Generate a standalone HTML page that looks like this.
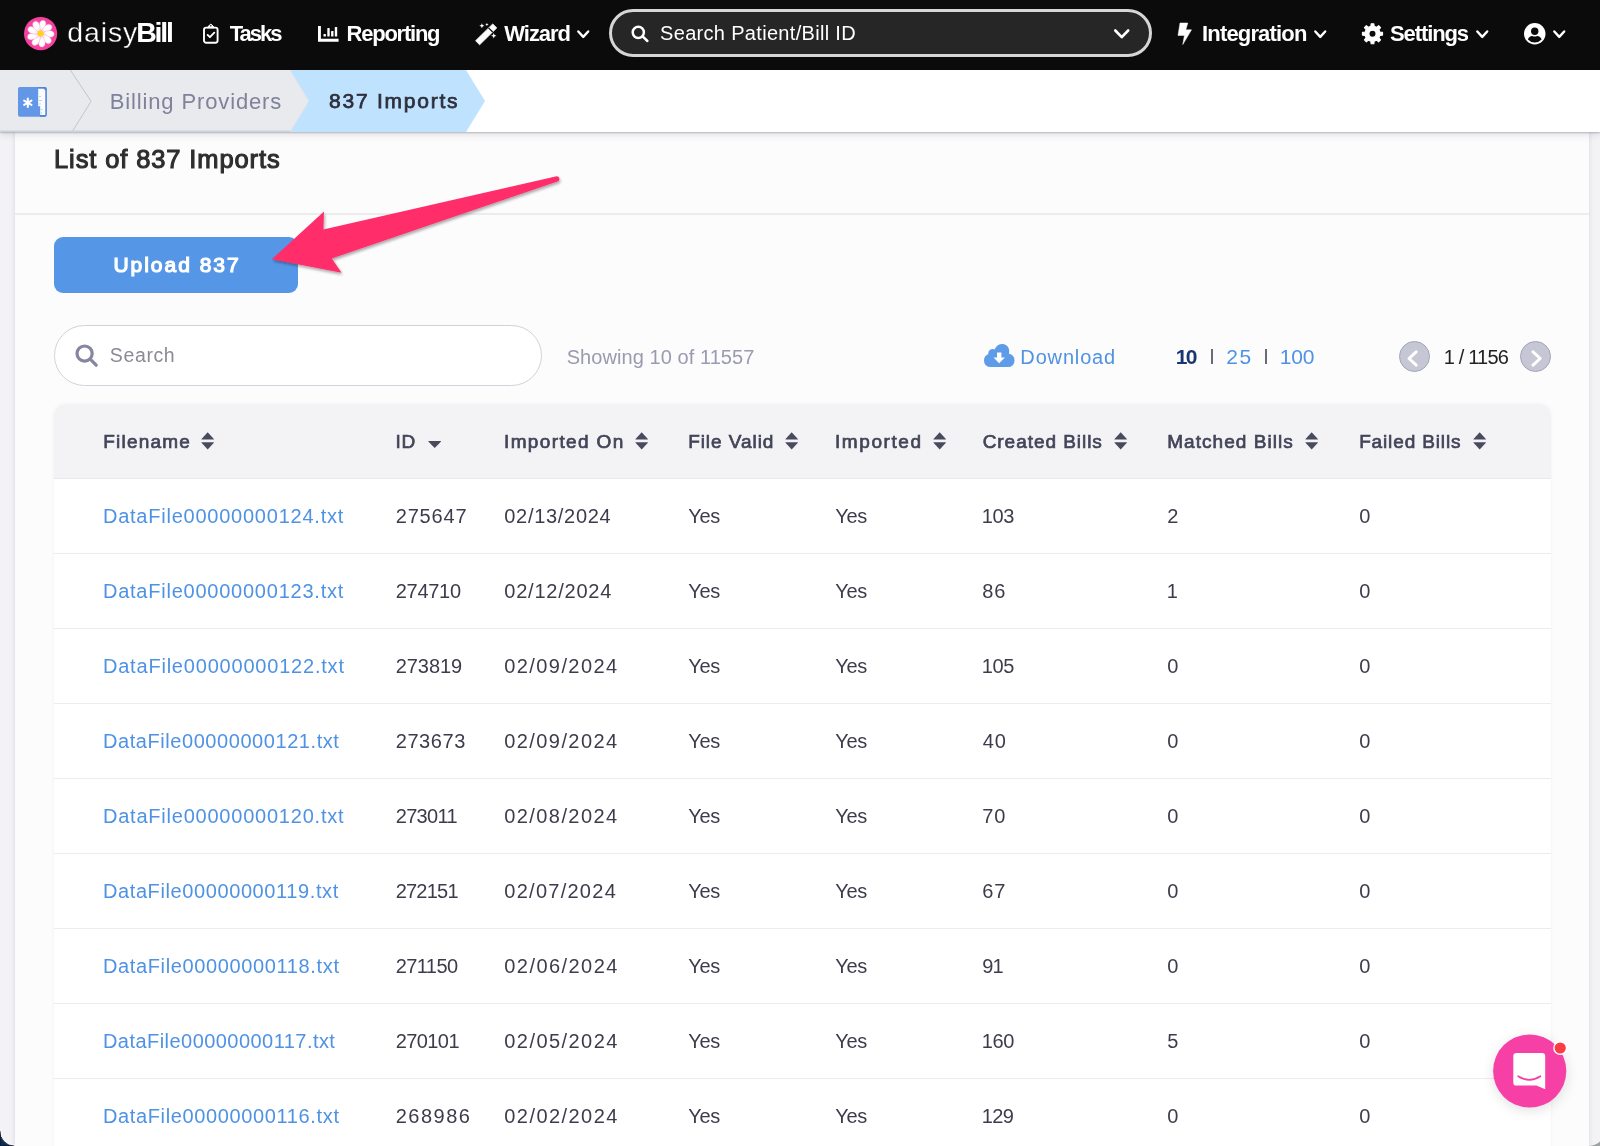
<!DOCTYPE html><html lang="en"><head><meta charset="utf-8"><title>837 Imports - daisyBill</title><style>
*{box-sizing:border-box;margin:0;padding:0}
html,body{width:1600px;height:1146px;overflow:hidden}
body{background:#f3f3f6;font-family:'Liberation Sans',sans-serif;position:relative}
.t{position:absolute;line-height:1;white-space:pre}
.abs{position:absolute}
.lt{-webkit-text-stroke:.35px #0b0b0b}
svg{position:absolute;overflow:visible}
#root{position:absolute;left:0;top:0;width:1600px;height:1146px;will-change:transform}
#nav{position:absolute;left:0;top:0;width:1600px;height:70px;background:#0b0b0b}
#crumb{position:absolute;left:0;top:70px;width:1600px;height:62px;background:#fff;box-shadow:0 1px 1.5px rgba(70,70,100,.30),0 2px 8px rgba(60,60,90,.16)}
#card{position:absolute;left:15px;top:131px;width:1574px;height:1030px;background:#fcfcfc;box-shadow:0 0 5px rgba(40,40,70,.13)}
#divider{position:absolute;left:15px;top:213px;width:1574px;height:2px;background:#ececee}
#btn{position:absolute;left:53.6px;top:237.3px;width:244.4px;height:55.3px;border-radius:9px;background:#5597e6}
#search{position:absolute;left:53.5px;top:325px;width:488.5px;height:60.5px;border-radius:31px;background:#fff;border:1.5px solid #d2d2dd}
#sbox{position:absolute;left:609.4px;top:8.7px;width:542.8px;height:48.7px;border-radius:25px;background:#262626;border:3px solid #d6d6d6}
#table{position:absolute;left:53.5px;top:404px;width:1497.5px;height:760px;background:#fff;border-radius:12px 12px 0 0;overflow:hidden;box-shadow:0 0 4px rgba(60,60,90,.06)}
#thead{position:absolute;left:0;top:0;width:100%;height:74px;background:#f3f3f6}
.rl{position:absolute;left:0;width:100%;height:1.5px;background:#ececf0}
.pg{position:absolute;width:31px;height:31px;border-radius:50%;background:#c6c7d5;border:1.5px solid #a3a4ba}
</style></head><body><div id="root">
<main>
<div id="card"></div><div id="divider"></div>
<span class="t" style="left:54.05px;top:147px;font-size:25.5px;font-weight:400;color:#2e2e30;letter-spacing:0.88px;-webkit-text-stroke:1.1px #2e2e30">List of 837 Imports</span>
<div id="btn"></div>
<span class="t" style="left:113.38px;top:254px;font-size:21px;font-weight:400;color:#fff;letter-spacing:1.983px;-webkit-text-stroke:1.2px #fff">Upload 837</span>
<svg style="left:0;top:0" width="1600" height="400" viewBox="0 0 1600 400">
<defs><filter id="sh" x="-10%" y="-10%" width="120%" height="130%"><feGaussianBlur in="SourceAlpha" stdDeviation="1.6"/><feOffset dx="0.5" dy="2"/><feComponentTransfer><feFuncA type="linear" slope=".35"/></feComponentTransfer><feMerge><feMergeNode/><feMergeNode in="SourceGraphic"/></feMerge></filter></defs>
<path filter="url(#sh)" fill="#ff2d6a" d="M555.6 176.4 Q558.6 175.6 559.3 178.3 Q559.9 180.6 557.4 181.6 L331.8 258.4 L341.6 272.8 L271.8 259.3 L324 211.4 L323.4 229.6 Z"/>
</svg>
<div id="search"></div>
<svg style="left:74.6px;top:344.2px" width="23" height="23" viewBox="0 0 23 23" fill="none" stroke="#8686a1" stroke-width="3.2">
<circle cx="9.6" cy="9.6" r="7.6"/><path d="M15.2 15.2 L21.2 21.2" stroke-linecap="round"/></svg>
<span class="t" style="left:109.86px;top:346px;font-size:19.5px;font-weight:400;color:#8b8b96;letter-spacing:0.615px">Search</span>
<span class="t" style="left:566.64px;top:347px;font-size:20px;font-weight:400;color:#9a9ab0;letter-spacing:0.072px">Showing 10 of 11557</span>
<svg style="left:983.5px;top:344px" width="30.5" height="23" viewBox="0 0 30.5 23">
<path fill="#5e9be8" d="M7 23 Q0 23 0 16.4 Q0 11.8 4.2 10.2 Q4 7.2 6.4 5.6 Q8.6 4.4 10.6 5.4 Q13.2 0 18.4 0 Q25.4 .6 25.2 8 Q25.2 9 24.9 9.8 Q30.5 11 30.5 16.4 Q30.5 23 23.6 23Z"/>
<path fill="#fff" d="M13 8.4 h4.4 v5 h3.5 l-5.7 5.9 l-5.7 -5.9 h3.5z"/></svg>
<span class="t" style="left:1020.36px;top:347px;font-size:20px;font-weight:400;color:#4f92e4;letter-spacing:0.844px">Download</span>
<span class="t" style="left:1175.65px;top:346px;font-size:21px;font-weight:700;color:#1a3672;letter-spacing:-1.657px">10</span>
<div class="abs" style="left:1211px;top:348.8px;width:2.1px;height:15.4px;background:#6a6a7a"></div>
<span class="t" style="left:1226.32px;top:346px;font-size:21px;font-weight:400;color:#4f92e4;letter-spacing:1.6px">25</span>
<div class="abs" style="left:1265px;top:348.8px;width:2.1px;height:15.4px;background:#6a6a7a"></div>
<span class="t" style="left:1279.80px;top:346px;font-size:21px;font-weight:400;color:#4f92e4;letter-spacing:-0.2px">100</span>
<div class="pg" style="left:1398.5px;top:341.2px"></div>
<svg style="left:1406px;top:349.5px" width="13" height="17" viewBox="0 0 13 17" fill="none" stroke="#fff" stroke-width="3" stroke-linecap="round" stroke-linejoin="round"><path d="M10.2 1.8 L3 8.5 L10.2 15.2"/></svg>
<span class="t" style="left:1443.66px;top:347px;font-size:20px;font-weight:400;color:#222;letter-spacing:-0.799px">1 / 1156</span>
<div class="pg" style="left:1520px;top:341.2px"></div>
<svg style="left:1530px;top:349.5px" width="13" height="17" viewBox="0 0 13 17" fill="none" stroke="#fff" stroke-width="3" stroke-linecap="round" stroke-linejoin="round"><path d="M3 1.8 L10.2 8.5 L3 15.2"/></svg>
<div id="table"><div id="thead"></div><div class="rl" style="top:73.75px;background:#e8e8ee"></div><div class="rl" style="top:148.75px"></div><div class="rl" style="top:223.75px"></div><div class="rl" style="top:298.75px"></div><div class="rl" style="top:373.75px"></div><div class="rl" style="top:448.75px"></div><div class="rl" style="top:523.75px"></div><div class="rl" style="top:598.75px"></div><div class="rl" style="top:673.75px"></div><div class="rl" style="top:748.75px"></div></div>
<span class="t" style="left:103.33px;top:432px;font-size:19px;font-weight:400;color:#434458;letter-spacing:1.188px;-webkit-text-stroke:0.7px #434458">Filename</span>
<svg style="left:200.9px;top:431.5px" width="13.4" height="17.8" viewBox="0 0 13.4 17.8" fill="#4a4a5e"><path d="M6.7 0.3 L12.9 7 Q13.2 7.6 12.5 7.6 H0.9 Q0.2 7.6 0.5 7Z"/><path d="M6.7 17.5 L12.9 10.8 Q13.2 10.2 12.5 10.2 H0.9 Q0.2 10.2 0.5 10.8Z"/></svg>
<span class="t" style="left:395.49px;top:432px;font-size:19px;font-weight:400;color:#434458;letter-spacing:0.629px;-webkit-text-stroke:0.7px #434458">ID</span>
<span class="t" style="left:503.99px;top:432px;font-size:19px;font-weight:400;color:#434458;letter-spacing:1.375px;-webkit-text-stroke:0.7px #434458">Imported On</span>
<svg style="left:635.4px;top:431.5px" width="13.4" height="17.8" viewBox="0 0 13.4 17.8" fill="#4a4a5e"><path d="M6.7 0.3 L12.9 7 Q13.2 7.6 12.5 7.6 H0.9 Q0.2 7.6 0.5 7Z"/><path d="M6.7 17.5 L12.9 10.8 Q13.2 10.2 12.5 10.2 H0.9 Q0.2 10.2 0.5 10.8Z"/></svg>
<span class="t" style="left:688.13px;top:432px;font-size:19px;font-weight:400;color:#434458;letter-spacing:0.945px;-webkit-text-stroke:0.7px #434458">File Valid</span>
<svg style="left:785.4px;top:431.5px" width="13.4" height="17.8" viewBox="0 0 13.4 17.8" fill="#4a4a5e"><path d="M6.7 0.3 L12.9 7 Q13.2 7.6 12.5 7.6 H0.9 Q0.2 7.6 0.5 7Z"/><path d="M6.7 17.5 L12.9 10.8 Q13.2 10.2 12.5 10.2 H0.9 Q0.2 10.2 0.5 10.8Z"/></svg>
<span class="t" style="left:834.99px;top:432px;font-size:19px;font-weight:400;color:#434458;letter-spacing:1.584px;-webkit-text-stroke:0.7px #434458">Imported</span>
<svg style="left:932.9px;top:431.5px" width="13.4" height="17.8" viewBox="0 0 13.4 17.8" fill="#4a4a5e"><path d="M6.7 0.3 L12.9 7 Q13.2 7.6 12.5 7.6 H0.9 Q0.2 7.6 0.5 7Z"/><path d="M6.7 17.5 L12.9 10.8 Q13.2 10.2 12.5 10.2 H0.9 Q0.2 10.2 0.5 10.8Z"/></svg>
<span class="t" style="left:982.66px;top:432px;font-size:19px;font-weight:400;color:#434458;letter-spacing:0.958px;-webkit-text-stroke:0.7px #434458">Created Bills</span>
<svg style="left:1114.4px;top:431.5px" width="13.4" height="17.8" viewBox="0 0 13.4 17.8" fill="#4a4a5e"><path d="M6.7 0.3 L12.9 7 Q13.2 7.6 12.5 7.6 H0.9 Q0.2 7.6 0.5 7Z"/><path d="M6.7 17.5 L12.9 10.8 Q13.2 10.2 12.5 10.2 H0.9 Q0.2 10.2 0.5 10.8Z"/></svg>
<span class="t" style="left:1167.13px;top:432px;font-size:19px;font-weight:400;color:#434458;letter-spacing:1.058px;-webkit-text-stroke:0.7px #434458">Matched Bills</span>
<svg style="left:1305.4px;top:431.5px" width="13.4" height="17.8" viewBox="0 0 13.4 17.8" fill="#4a4a5e"><path d="M6.7 0.3 L12.9 7 Q13.2 7.6 12.5 7.6 H0.9 Q0.2 7.6 0.5 7Z"/><path d="M6.7 17.5 L12.9 10.8 Q13.2 10.2 12.5 10.2 H0.9 Q0.2 10.2 0.5 10.8Z"/></svg>
<span class="t" style="left:1359.13px;top:432px;font-size:19px;font-weight:400;color:#434458;letter-spacing:0.867px;-webkit-text-stroke:0.7px #434458">Failed Bills</span>
<svg style="left:1472.9px;top:431.5px" width="13.4" height="17.8" viewBox="0 0 13.4 17.8" fill="#4a4a5e"><path d="M6.7 0.3 L12.9 7 Q13.2 7.6 12.5 7.6 H0.9 Q0.2 7.6 0.5 7Z"/><path d="M6.7 17.5 L12.9 10.8 Q13.2 10.2 12.5 10.2 H0.9 Q0.2 10.2 0.5 10.8Z"/></svg>
<svg style="left:428px;top:441.4px" width="13.4" height="7" viewBox="0 0 13.4 7" fill="#4a4a5e"><path d="M6.7 6.9 L12.9 .8 Q13.2 .1 12.5 .1 H0.9 Q0.2 .1 .5 .8Z"/></svg>
<span class="t r fn" style="left:102.96px;top:506px;font-size:20px;font-weight:400;color:#4f92e4;letter-spacing:0.765px">DataFile00000000124.txt</span>
<span class="t r" style="left:395.70px;top:506px;font-size:20px;font-weight:400;color:#3c3c4c;letter-spacing:0.838px">275647</span>
<span class="t r" style="left:504.30px;top:506px;font-size:20px;font-weight:400;color:#3c3c4c;letter-spacing:0.698px">02/13/2024</span>
<span class="t r" style="left:688.24px;top:506px;font-size:20px;font-weight:400;color:#3c3c4c;letter-spacing:-0.354px">Yes</span>
<span class="t r" style="left:835.24px;top:506px;font-size:20px;font-weight:400;color:#3c3c4c;letter-spacing:-0.354px">Yes</span>
<span class="t r" style="left:981.76px;top:506px;font-size:20px;font-weight:400;color:#3c3c4c;letter-spacing:-0.433px">103</span>
<span class="t r" style="left:1167.30px;top:506px;font-size:20px;font-weight:400;color:#3c3c4c;letter-spacing:0.9px">2</span>
<span class="t r" style="left:1359.30px;top:506px;font-size:20px;font-weight:400;color:#3c3c4c;letter-spacing:0.9px">0</span>
<span class="t r fn" style="left:102.96px;top:581px;font-size:20px;font-weight:400;color:#4f92e4;letter-spacing:0.765px">DataFile00000000123.txt</span>
<span class="t r" style="left:395.70px;top:581px;font-size:20px;font-weight:400;color:#3c3c4c;letter-spacing:-0.274px">274710</span>
<span class="t r" style="left:504.30px;top:581px;font-size:20px;font-weight:400;color:#3c3c4c;letter-spacing:0.775px">02/12/2024</span>
<span class="t r" style="left:688.24px;top:581px;font-size:20px;font-weight:400;color:#3c3c4c;letter-spacing:-0.354px">Yes</span>
<span class="t r" style="left:835.24px;top:581px;font-size:20px;font-weight:400;color:#3c3c4c;letter-spacing:-0.354px">Yes</span>
<span class="t r" style="left:982.30px;top:581px;font-size:20px;font-weight:400;color:#3c3c4c;letter-spacing:0.9px">86</span>
<span class="t r" style="left:1166.76px;top:581px;font-size:20px;font-weight:400;color:#3c3c4c;letter-spacing:-0.8px">1</span>
<span class="t r" style="left:1359.30px;top:581px;font-size:20px;font-weight:400;color:#3c3c4c;letter-spacing:0.9px">0</span>
<span class="t r fn" style="left:102.96px;top:656px;font-size:20px;font-weight:400;color:#4f92e4;letter-spacing:0.796px">DataFile00000000122.txt</span>
<span class="t r" style="left:395.70px;top:656px;font-size:20px;font-weight:400;color:#3c3c4c;letter-spacing:-0.044px">273819</span>
<span class="t r" style="left:504.30px;top:656px;font-size:20px;font-weight:400;color:#3c3c4c;letter-spacing:1.409px">02/09/2024</span>
<span class="t r" style="left:688.24px;top:656px;font-size:20px;font-weight:400;color:#3c3c4c;letter-spacing:-0.354px">Yes</span>
<span class="t r" style="left:835.24px;top:656px;font-size:20px;font-weight:400;color:#3c3c4c;letter-spacing:-0.354px">Yes</span>
<span class="t r" style="left:981.76px;top:656px;font-size:20px;font-weight:400;color:#3c3c4c;letter-spacing:-0.315px">105</span>
<span class="t r" style="left:1167.30px;top:656px;font-size:20px;font-weight:400;color:#3c3c4c;letter-spacing:0.9px">0</span>
<span class="t r" style="left:1359.30px;top:656px;font-size:20px;font-weight:400;color:#3c3c4c;letter-spacing:0.9px">0</span>
<span class="t r fn" style="left:102.96px;top:731px;font-size:20px;font-weight:400;color:#4f92e4;letter-spacing:0.565px">DataFile00000000121.txt</span>
<span class="t r" style="left:395.70px;top:731px;font-size:20px;font-weight:400;color:#3c3c4c;letter-spacing:0.591px">273673</span>
<span class="t r" style="left:504.30px;top:731px;font-size:20px;font-weight:400;color:#3c3c4c;letter-spacing:1.409px">02/09/2024</span>
<span class="t r" style="left:688.24px;top:731px;font-size:20px;font-weight:400;color:#3c3c4c;letter-spacing:-0.354px">Yes</span>
<span class="t r" style="left:835.24px;top:731px;font-size:20px;font-weight:400;color:#3c3c4c;letter-spacing:-0.354px">Yes</span>
<span class="t r" style="left:982.84px;top:731px;font-size:20px;font-weight:400;color:#3c3c4c;letter-spacing:0.9px">40</span>
<span class="t r" style="left:1167.30px;top:731px;font-size:20px;font-weight:400;color:#3c3c4c;letter-spacing:0.9px">0</span>
<span class="t r" style="left:1359.30px;top:731px;font-size:20px;font-weight:400;color:#3c3c4c;letter-spacing:0.9px">0</span>
<span class="t r fn" style="left:102.96px;top:806px;font-size:20px;font-weight:400;color:#4f92e4;letter-spacing:0.778px">DataFile00000000120.txt</span>
<span class="t r" style="left:395.70px;top:806px;font-size:20px;font-weight:400;color:#3c3c4c;letter-spacing:-0.677px">273011</span>
<span class="t r" style="left:504.30px;top:806px;font-size:20px;font-weight:400;color:#3c3c4c;letter-spacing:1.409px">02/08/2024</span>
<span class="t r" style="left:688.24px;top:806px;font-size:20px;font-weight:400;color:#3c3c4c;letter-spacing:-0.354px">Yes</span>
<span class="t r" style="left:835.24px;top:806px;font-size:20px;font-weight:400;color:#3c3c4c;letter-spacing:-0.354px">Yes</span>
<span class="t r" style="left:982.26px;top:806px;font-size:20px;font-weight:400;color:#3c3c4c;letter-spacing:0.853px">70</span>
<span class="t r" style="left:1167.30px;top:806px;font-size:20px;font-weight:400;color:#3c3c4c;letter-spacing:0.9px">0</span>
<span class="t r" style="left:1359.30px;top:806px;font-size:20px;font-weight:400;color:#3c3c4c;letter-spacing:0.9px">0</span>
<span class="t r fn" style="left:102.96px;top:881px;font-size:20px;font-weight:400;color:#4f92e4;letter-spacing:0.603px">DataFile00000000119.txt</span>
<span class="t r" style="left:395.70px;top:881px;font-size:20px;font-weight:400;color:#3c3c4c;letter-spacing:-0.785px">272151</span>
<span class="t r" style="left:504.30px;top:881px;font-size:20px;font-weight:400;color:#3c3c4c;letter-spacing:1.264px">02/07/2024</span>
<span class="t r" style="left:688.24px;top:881px;font-size:20px;font-weight:400;color:#3c3c4c;letter-spacing:-0.354px">Yes</span>
<span class="t r" style="left:835.24px;top:881px;font-size:20px;font-weight:400;color:#3c3c4c;letter-spacing:-0.354px">Yes</span>
<span class="t r" style="left:982.23px;top:881px;font-size:20px;font-weight:400;color:#3c3c4c;letter-spacing:0.9px">67</span>
<span class="t r" style="left:1167.30px;top:881px;font-size:20px;font-weight:400;color:#3c3c4c;letter-spacing:0.9px">0</span>
<span class="t r" style="left:1359.30px;top:881px;font-size:20px;font-weight:400;color:#3c3c4c;letter-spacing:0.9px">0</span>
<span class="t r fn" style="left:102.96px;top:956px;font-size:20px;font-weight:400;color:#4f92e4;letter-spacing:0.635px">DataFile00000000118.txt</span>
<span class="t r" style="left:395.70px;top:956px;font-size:20px;font-weight:400;color:#3c3c4c;letter-spacing:-0.566px">271150</span>
<span class="t r" style="left:504.30px;top:956px;font-size:20px;font-weight:400;color:#3c3c4c;letter-spacing:1.442px">02/06/2024</span>
<span class="t r" style="left:688.24px;top:956px;font-size:20px;font-weight:400;color:#3c3c4c;letter-spacing:-0.354px">Yes</span>
<span class="t r" style="left:835.24px;top:956px;font-size:20px;font-weight:400;color:#3c3c4c;letter-spacing:-0.354px">Yes</span>
<span class="t r" style="left:982.29px;top:956px;font-size:20px;font-weight:400;color:#3c3c4c;letter-spacing:-0.8px">91</span>
<span class="t r" style="left:1167.30px;top:956px;font-size:20px;font-weight:400;color:#3c3c4c;letter-spacing:0.9px">0</span>
<span class="t r" style="left:1359.30px;top:956px;font-size:20px;font-weight:400;color:#3c3c4c;letter-spacing:0.9px">0</span>
<span class="t r fn" style="left:102.96px;top:1031px;font-size:20px;font-weight:400;color:#4f92e4;letter-spacing:0.453px">DataFile00000000117.txt</span>
<span class="t r" style="left:395.70px;top:1031px;font-size:20px;font-weight:400;color:#3c3c4c;letter-spacing:-0.585px">270101</span>
<span class="t r" style="left:504.30px;top:1031px;font-size:20px;font-weight:400;color:#3c3c4c;letter-spacing:1.442px">02/05/2024</span>
<span class="t r" style="left:688.24px;top:1031px;font-size:20px;font-weight:400;color:#3c3c4c;letter-spacing:-0.354px">Yes</span>
<span class="t r" style="left:835.24px;top:1031px;font-size:20px;font-weight:400;color:#3c3c4c;letter-spacing:-0.354px">Yes</span>
<span class="t r" style="left:981.76px;top:1031px;font-size:20px;font-weight:400;color:#3c3c4c;letter-spacing:-0.346px">160</span>
<span class="t r" style="left:1167.21px;top:1031px;font-size:20px;font-weight:400;color:#3c3c4c;letter-spacing:0.9px">5</span>
<span class="t r" style="left:1359.30px;top:1031px;font-size:20px;font-weight:400;color:#3c3c4c;letter-spacing:0.9px">0</span>
<span class="t r fn" style="left:102.96px;top:1106px;font-size:20px;font-weight:400;color:#4f92e4;letter-spacing:0.635px">DataFile00000000116.txt</span>
<span class="t r" style="left:395.70px;top:1106px;font-size:20px;font-weight:400;color:#3c3c4c;letter-spacing:1.504px">268986</span>
<span class="t r" style="left:504.30px;top:1106px;font-size:20px;font-weight:400;color:#3c3c4c;letter-spacing:1.442px">02/02/2024</span>
<span class="t r" style="left:688.24px;top:1106px;font-size:20px;font-weight:400;color:#3c3c4c;letter-spacing:-0.354px">Yes</span>
<span class="t r" style="left:835.24px;top:1106px;font-size:20px;font-weight:400;color:#3c3c4c;letter-spacing:-0.354px">Yes</span>
<span class="t r" style="left:981.76px;top:1106px;font-size:20px;font-weight:400;color:#3c3c4c;letter-spacing:-0.672px">129</span>
<span class="t r" style="left:1167.30px;top:1106px;font-size:20px;font-weight:400;color:#3c3c4c;letter-spacing:0.9px">0</span>
<span class="t r" style="left:1359.30px;top:1106px;font-size:20px;font-weight:400;color:#3c3c4c;letter-spacing:0.9px">0</span>
<svg style="left:1480px;top:1020px" width="110" height="110" viewBox="0 0 110 110">
<defs><filter id="cs" x="-40%" y="-40%" width="180%" height="180%"><feGaussianBlur stdDeviation="7"/></filter></defs>
<circle cx="50" cy="54" r="36" fill="#000" opacity=".13" filter="url(#cs)"/>
<circle cx="49.7" cy="51" r="36.6" fill="#f640a6"/>
<path fill="#fff" d="M36.5 33 H62 Q65.2 33 65.2 36.2 V69.2 L56.4 65.6 H36.5 Q33.3 65.6 33.3 62.4 V36.2 Q33.3 33 36.5 33Z"/>
<path d="M38.2 56.2 Q49.3 63.4 60.4 56.2" fill="none" stroke="#f640a6" stroke-width="1.7" stroke-linecap="round"/>
<circle cx="80.2" cy="28" r="7" fill="#fff"/><circle cx="80.2" cy="28" r="5.6" fill="#fb3d43"/>
</svg>
<svg style="left:1580px;top:1126px" width="20" height="20" viewBox="0 0 20 20"><path d="M20 15.6 V20 H9 Q16 19.4 20 15.6Z" fill="#9da3a3"/></svg>
<svg style="left:0;top:1126px" width="20" height="20" viewBox="0 0 20 20"><path d="M0 5 V20 H14 A14.5 14.5 0 0 1 0 5Z" fill="#0d2e50" stroke="#060a2c" stroke-width=".8"/><path d="M.9 5 A13.6 13.6 0 0 0 14.5 19.1" fill="none" stroke="#fff" stroke-width=".8" opacity=".9"/></svg>
</main>
<nav aria-label="Breadcrumb">
<div id="crumb"></div>
<svg style="left:0;top:70px" width="500" height="62" viewBox="0 0 500 62">
<path d="M0 0 H290 L309 31 L290 62 H0Z" fill="#e9eaee"/>
<path d="M290 0 H466 L485 31 L466 62 H290 L309 31Z" fill="#bfe3fe"/>
<path d="M70.3 0 L91.1 31.3 L72 62" fill="none" stroke="#c2c5cf" stroke-width="1"/>
<path d="M0 61.3 H290.4" stroke="#cfd1da" stroke-width="1.4"/><path d="M290 0 L309 31 L290 62" fill="none" stroke="#d9e3ee" stroke-width="1"/>
</svg>
<svg style="left:18.2px;top:86.9px" width="28.7" height="29.7" viewBox="0 0 28.7 29.7">
<rect x="0" y="0" width="28.7" height="29.7" rx="2" fill="#6297e8"/>
<path d="M20 0 H26.7 Q28.7 0 28.7 2 V27.7 Q28.7 29.7 26.7 29.7 H22 V28 H27.2 V1.6 H20Z" fill="#4f83d6"/>
<path d="M20.2 1.7 H25.6 L27.3 3.6 V28 H22.2 V19.2 H20.2Z" fill="#fbfcfe"/>
<path d="M21.2 9.5 h1.6 M21.2 13.6 h2.6 M21.2 17 h1.6 M23 22.5 h1.4 M23 26 h1" stroke="#b9bfcc" stroke-width=".9"/>
<g stroke="#fff" stroke-width="2" stroke-linecap="round"><path d="M9.8 11.4 V20 M6.1 13.55 L13.5 17.85 M13.5 13.55 L6.1 17.85"/></g>
</svg>
<span class="t" style="left:109.70px;top:91px;font-size:22px;font-weight:400;color:#7e829a;letter-spacing:0.869px">Billing Providers</span>
<span class="t" style="left:329.08px;top:90px;font-size:21px;font-weight:400;color:#2f2f3c;letter-spacing:1.759px;-webkit-text-stroke:0.75px #2f2f3c">837 Imports</span>
</nav>
<header>
<div id="nav"></div>
<svg style="left:24.4px;top:16.8px" width="33.2" height="33.2" viewBox="-16.6 -16.6 33.2 33.2">
<defs><radialGradient id="pg" cx="50%" cy="100%" r="90%"><stop offset="0" stop-color="#fbb6d9"/><stop offset=".55" stop-color="#fff"/><stop offset="1" stop-color="#fff"/></radialGradient></defs>
<circle r="16.6" fill="#f6429f"/>
<g fill="url(#pg)" stroke="#f98cc4" stroke-width="0.45"><path d="M0 0 C-1.2 -3.4 -4.6 -8.8 -1.4 -12.6 C0.6 -14.6 3.9 -13.4 4 -10.2 C4.1 -6.4 1.4 -3.4 0 0Z" transform="rotate(8)"/><path d="M0 0 C-1.2 -3.4 -4.6 -8.8 -1.4 -12.6 C0.6 -14.6 3.9 -13.4 4 -10.2 C4.1 -6.4 1.4 -3.4 0 0Z" transform="rotate(48)"/><path d="M0 0 C-1.2 -3.4 -4.6 -8.8 -1.4 -12.6 C0.6 -14.6 3.9 -13.4 4 -10.2 C4.1 -6.4 1.4 -3.4 0 0Z" transform="rotate(88)"/><path d="M0 0 C-1.2 -3.4 -4.6 -8.8 -1.4 -12.6 C0.6 -14.6 3.9 -13.4 4 -10.2 C4.1 -6.4 1.4 -3.4 0 0Z" transform="rotate(128)"/><path d="M0 0 C-1.2 -3.4 -4.6 -8.8 -1.4 -12.6 C0.6 -14.6 3.9 -13.4 4 -10.2 C4.1 -6.4 1.4 -3.4 0 0Z" transform="rotate(168)"/><path d="M0 0 C-1.2 -3.4 -4.6 -8.8 -1.4 -12.6 C0.6 -14.6 3.9 -13.4 4 -10.2 C4.1 -6.4 1.4 -3.4 0 0Z" transform="rotate(208)"/><path d="M0 0 C-1.2 -3.4 -4.6 -8.8 -1.4 -12.6 C0.6 -14.6 3.9 -13.4 4 -10.2 C4.1 -6.4 1.4 -3.4 0 0Z" transform="rotate(248)"/><path d="M0 0 C-1.2 -3.4 -4.6 -8.8 -1.4 -12.6 C0.6 -14.6 3.9 -13.4 4 -10.2 C4.1 -6.4 1.4 -3.4 0 0Z" transform="rotate(288)"/><path d="M0 0 C-1.2 -3.4 -4.6 -8.8 -1.4 -12.6 C0.6 -14.6 3.9 -13.4 4 -10.2 C4.1 -6.4 1.4 -3.4 0 0Z" transform="rotate(328)"/></g><circle r="3" fill="#ffd60a"/></svg>
<span class="t lt" style="left:67.35px;top:18px;font-size:28.5px;font-weight:400;color:#fff;letter-spacing:0.853px">daisy</span>
<span class="t" style="left:136.20px;top:18px;font-size:28.5px;font-weight:700;color:#fff;letter-spacing:-2.199px">Bill</span>
<svg style="left:203.3px;top:23.2px" width="15.6" height="20.8" viewBox="0 0 15.6 20.8" fill="none" stroke="#fff">
<rect x="1" y="4.6" width="13.6" height="15.2" rx="2.2" stroke-width="1.9"/>
<path d="M4.2 4.8 L6.6 2 Q7.8 0.4 9 2 L11.4 4.8Z" fill="#fff" stroke-width="1"/>
<circle cx="7.8" cy="2.7" r=".75" fill="#0b0b0b" stroke="none"/>
<path d="M4.6 11.9 L6.9 14.2 L11.3 9.7" stroke-width="1.9" stroke-linecap="round" stroke-linejoin="round"/>
</svg>
<span class="t" style="left:229.73px;top:23px;font-size:22px;font-weight:700;color:#fff;letter-spacing:-1.999px">Tasks</span>
<svg style="left:318.1px;top:25.7px" width="20.6" height="15.7" viewBox="0 0 20.6 15.7" fill="#fff">
<path d="M0 0 H2.9 V12.8 H20.6 V15.7 H0 Z"/>
<rect x="5.5" y="8" width="2.4" height="2.4" rx=".5"/>
<rect x="9.3" y="1.9" width="2.4" height="8.5" rx=".5"/>
<rect x="13.1" y="5" width="2.4" height="5.4" rx=".5"/>
<rect x="16.8" y="1" width="2.4" height="9.4" rx=".5"/>
</svg>
<span class="t" style="left:346.52px;top:23px;font-size:22px;font-weight:700;color:#fff;letter-spacing:-1.233px">Reporting</span>
<svg style="left:470px;top:20px" width="30" height="28" viewBox="0 0 30 28" fill="#fff">
<path d="M9.6 24.8 L5.6 20.7 L22.75 3.9 L26.75 7.9Z" stroke="#fff" stroke-width=".8" stroke-linejoin="round"/>
<path d="M18.5 7.8 L22.7 12" stroke="#0b0b0b" stroke-width="1.2"/>
<path d="M11.9 3.2 l.75 1.8 1.8 .75 -1.8 .75 -.75 1.8 -.75 -1.8 -1.8 -.75 1.8 -.75z"/>
<path d="M16.9 2.8 l.5 1.2 1.2 .5 -1.2 .5 -.5 1.2 -.5 -1.2 -1.2 -.5 1.2 -.5z"/>
<path d="M23.75 13 l.8 1.95 1.95 .8 -1.95 .8 -.8 1.95 -.8 -1.95 -1.95 -.8 1.95 -.8z"/>
</svg>
<span class="t" style="left:504.33px;top:23px;font-size:22px;font-weight:700;color:#fff;letter-spacing:-1.055px">Wizard</span>
<svg style="left:577px;top:30.3px" width="12.5" height="8.5" viewBox="0 0 12.5 8.5" fill="none" stroke="#fff" stroke-width="2.4" stroke-linecap="round" stroke-linejoin="round"><path d="M1.3 1.5 L6.25 6.9 L11.2 1.5"/></svg>
<div id="sbox"></div>
<svg style="left:631px;top:24.8px" width="18" height="17.5" viewBox="0 0 18 17.5" fill="none" stroke="#fff" stroke-width="2.5">
<circle cx="7.3" cy="7.3" r="5.6"/><path d="M11.6 11.4 L16.4 16" stroke-linecap="round"/></svg>
<span class="t" style="left:660.04px;top:23px;font-size:20px;font-weight:400;color:#fff;letter-spacing:0.317px">Search Patient/Bill ID</span>
<svg style="left:1113.8px;top:29px" width="15.5" height="9.8" viewBox="0 0 15.5 9.8" fill="none" stroke="#fff" stroke-width="2.6" stroke-linecap="round" stroke-linejoin="round"><path d="M1.3 1.5 L7.75 8.200000000000001 L14.2 1.5"/></svg>
<svg style="left:1177.5px;top:23px" width="13.5" height="21.5" viewBox="0 0 13.5 21.5" fill="#fff">
<path d="M2 0 H9.8 L7.8 6.8 H13.5 L4.8 21.5 L6.4 12.4 H0 Z" stroke="#fff" stroke-width=".5" stroke-linejoin="round"/></svg>
<span class="t" style="left:1202.02px;top:23px;font-size:22px;font-weight:700;color:#fff;letter-spacing:-0.834px">Integration</span>
<svg style="left:1313.8px;top:30.3px" width="12.5" height="8.5" viewBox="0 0 12.5 8.5" fill="none" stroke="#fff" stroke-width="2.4" stroke-linecap="round" stroke-linejoin="round"><path d="M1.3 1.5 L6.25 6.9 L11.2 1.5"/></svg>
<svg style="left:1362px;top:23px" width="21" height="21.5" viewBox="0 0 21 21.5"><path fill="#fff" fill-rule="evenodd" stroke="#fff" stroke-width="1.2" stroke-linejoin="round" d="M8.90 3.32 L9.16 0.74 L11.84 0.74 L12.10 3.32 L14.62 4.37 L16.63 2.72 L18.53 4.62 L16.88 6.63 L17.93 9.15 L20.51 9.41 L20.51 12.09 L17.93 12.35 L16.88 14.87 L18.53 16.88 L16.63 18.78 L14.62 17.13 L12.10 18.18 L11.84 20.76 L9.16 20.76 L8.90 18.18 L6.38 17.13 L4.37 18.78 L2.47 16.88 L4.12 14.87 L3.07 12.35 L0.49 12.09 L0.49 9.41 L3.07 9.15 L4.12 6.63 L2.47 4.62 L4.37 2.72 L6.38 4.37Z M6.90 10.75 a3.6 3.6 0 1 0 7.2 0 a3.6 3.6 0 1 0 -7.2 0Z"/></svg>
<span class="t" style="left:1390.00px;top:23px;font-size:22px;font-weight:700;color:#fff;letter-spacing:-1.109px">Settings</span>
<svg style="left:1475.5px;top:30.3px" width="12.5" height="8.5" viewBox="0 0 12.5 8.5" fill="none" stroke="#fff" stroke-width="2.4" stroke-linecap="round" stroke-linejoin="round"><path d="M1.3 1.5 L6.25 6.9 L11.2 1.5"/></svg>
<svg style="left:1523.5px;top:23px" width="21.5" height="21.5" viewBox="0 0 21.5 21.5">
<circle cx="10.75" cy="10.75" r="10.75" fill="#fff"/>
<circle cx="10.75" cy="8.2" r="3.7" fill="#0b0b0b"/>
<path d="M3.9 16.6 Q5 12.9 8.3 12.9 Q10.75 13.9 13.2 12.9 Q16.5 12.9 17.6 16.6 Q14.8 19.6 10.75 19.6 Q6.7 19.6 3.9 16.6Z" fill="#0b0b0b"/>
</svg>
<svg style="left:1553px;top:30.3px" width="12.5" height="8.5" viewBox="0 0 12.5 8.5" fill="none" stroke="#fff" stroke-width="2.4" stroke-linecap="round" stroke-linejoin="round"><path d="M1.3 1.5 L6.25 6.9 L11.2 1.5"/></svg>
</header>
</div></body></html>
